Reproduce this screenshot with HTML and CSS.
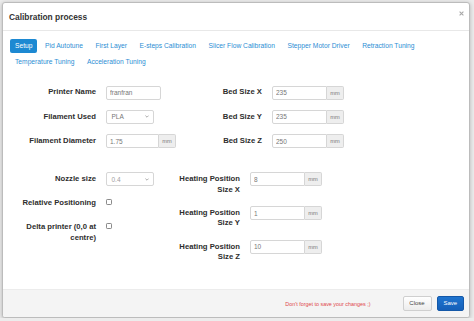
FILE: index.html
```html
<!DOCTYPE html>
<html>
<head>
<meta charset="utf-8">
<link rel="stylesheet" href="styles.css">
</head>
<body>
<div class="modal">
  <div class="modal-header">
    <h4 class="modal-title">Calibration process</h4>
    <span class="close-x"><svg width="5" height="5" viewBox="0 0 5 5"><path d="M0.6 0.6L4.4 4.4M4.4 0.6L0.6 4.4" stroke="#a8a8a8" stroke-width="1.1"/></svg></span>
  </div>
  <div class="modal-body">
    <ul class="nav-pills">
      <li class="active"><a>Setup</a></li>
      <li><a>Pid Autotune</a></li>
      <li><a>First Layer</a></li>
      <li><a>E-steps Calibration</a></li>
      <li><a>Slicer Flow Calibration</a></li>
      <li><a>Stepper Motor Driver</a></li>
      <li><a>Retraction Tuning</a></li>
      <li><a>Temperature Tuning</a></li>
      <li><a>Acceleration Tuning</a></li>
    </ul>

    <div class="grid-top">
      <label class="lbl">Printer Name</label>
      <div><input class="inp w-name" value="franfran"></div>
      <label class="lbl">Bed Size X</label>
      <div class="group"><input class="inp grp" value="235"><span class="addon">mm</span></div>

      <label class="lbl">Filament Used</label>
      <div><div class="select"><span>PLA</span><svg width="4" height="3" viewBox="0 0 4 3"><path d="M0.4 0.6L2 2.2L3.6 0.6" fill="none" stroke="#888" stroke-width="0.7"/></svg></div></div>
      <label class="lbl">Bed Size Y</label>
      <div class="group"><input class="inp grp" value="235"><span class="addon">mm</span></div>

      <label class="lbl">Filament Diameter</label>
      <div class="group"><input class="inp grp w-diam" value="1.75"><span class="addon">mm</span></div>
      <label class="lbl">Bed Size Z</label>
      <div class="group"><input class="inp grp" value="250"><span class="addon">mm</span></div>
    </div>

    <div class="bottom">
      <div class="col-left">
        <div class="row">
          <label class="lbl lbl-left">Nozzle size</label>
          <div class="select muted"><span>0.4</span><svg width="4" height="3" viewBox="0 0 4 3"><path d="M0.4 0.6L2 2.2L3.6 0.6" fill="none" stroke="#888" stroke-width="0.7"/></svg></div>
        </div>
        <div class="row">
          <label class="lbl lbl-left">Relative Positioning</label>
          <span class="check"></span>
        </div>
        <div class="row">
          <label class="lbl lbl-left">Delta printer (0,0 at centre)</label>
          <span class="check"></span>
        </div>
      </div>
      <div class="col-right">
        <div class="row">
          <label class="lbl lbl-right">Heating Position Size X</label>
          <div class="group"><input class="inp grp" value="8"><span class="addon">mm</span></div>
        </div>
        <div class="row">
          <label class="lbl lbl-right">Heating Position Size Y</label>
          <div class="group"><input class="inp grp" value="1"><span class="addon">mm</span></div>
        </div>
        <div class="row">
          <label class="lbl lbl-right">Heating Position Size Z</label>
          <div class="group"><input class="inp grp" value="10"><span class="addon">mm</span></div>
        </div>
      </div>
    </div>
  </div>
  <div class="modal-footer">
    <span class="reminder">Don't forget to save your changes ;)</span>
    <button class="btn btn-default">Close</button>
    <button class="btn btn-primary">Save</button>
  </div>
</div>
</body>
</html>
```

FILE: styles.css
```css
* {
  box-sizing: border-box;
  margin: 0;
  padding: 0;
}

body {
  background: #ececec;
  font-family: "Liberation Sans", Arial, sans-serif;
  color: #333;
  padding: 2px 4px 0 2px;
}

.modal {
  height: 316px;
  background: #fff;
  border: 1px solid #bcbcbc;
  border-radius: 3px;
  box-shadow: 0 1px 4px rgba(0, 0, 0, 0.25);
  display: flex;
  flex-direction: column;
  overflow: hidden;
}

.modal-header {
  height: 28px;
  flex: none;
  border-bottom: 1px solid #e8e8e8;
  display: flex;
  align-items: center;
  justify-content: space-between;
  padding: 0 5px 0 6px;
}

.modal-title {
  font-size: 8.4px;
  font-weight: bold;
  color: #333;
  line-height: 10px;
}

.close-x {
  align-self: flex-start;
  margin-top: 7.5px;
  display: flex;
}

.modal-body {
  flex: 1;
  padding: 8px 7px 0 7px;
}

.nav-pills {
  list-style: none;
  display: flex;
  flex-wrap: wrap;
  row-gap: 2px;
  column-gap: 2.5px;
}

.nav-pills a {
  display: block;
  padding: 3px 5px;
  font-size: 6.7px;
  line-height: 8px;
  color: #2c8ed4;
  border-radius: 2px;
}

.nav-pills .active a {
  background: #1d89d2;
  color: #fff;
}

.lbl {
  font-weight: bold;
  font-size: 7.7px;
  line-height: 10.5px;
  text-align: right;
  color: #2e2e2e;
}

.grid-top {
  margin-top: 16.7px;
  display: grid;
  grid-template-columns: 86px 85px 61px auto;
  column-gap: 10px;
  row-gap: 10.3px;
  align-items: center;
}

.inp {
  display: block;
  height: 14px;
  width: 55px;
  border: 1px solid #d6d6d6;
  border-radius: 2px;
  font-family: "Liberation Sans", Arial, sans-serif;
  font-size: 6.5px;
  color: #777;
  padding: 0 3px;
  background: #fff;
  outline: none;
}

.w-name {
  width: 55px;
}

.group {
  display: flex;
}

.inp.grp {
  width: 55px;
  border-radius: 2px 0 0 2px;
}

.inp.w-diam {
  width: 53px;
}

.addon {
  width: 17px;
  height: 14px;
  background: #eeeeee;
  border: 1px solid #d6d6d6;
  border-left: 0;
  border-radius: 0 2px 2px 0;
  font-size: 5.7px;
  color: #777;
  display: flex;
  align-items: center;
  justify-content: center;
}

.select {
  width: 48px;
  height: 14px;
  border: 1px solid #d6d6d6;
  border-radius: 2px;
  background: #fff;
  display: flex;
  align-items: center;
  justify-content: space-between;
  padding: 0 4.5px 0 4.5px;
  font-size: 6.5px;
  color: #777;
}

.select.muted {
  color: #a0a0a0;
}

.bottom {
  margin-top: 24.2px;
  display: flex;
}

.col-left {
  width: 166px;
  display: flex;
  flex-direction: column;
  row-gap: 10px;
}

.col-right {
  display: flex;
  flex-direction: column;
  row-gap: 11px;
}

.row {
  display: flex;
  align-items: flex-start;
  column-gap: 10px;
  min-height: 14px;
}

.row .lbl {
  padding-top: 1.75px;
}

.lbl-left {
  width: 86px;
  flex: none;
}

.lbl-right {
  width: 64px;
  flex: none;
}

.check {
  width: 6px;
  height: 6px;
  margin-top: 3px;
  border: 1px solid #8a8a8a;
  border-radius: 1.2px;
  background: #fff;
}

.modal-footer {
  height: 28px;
  flex: none;
  background: #f4f4f4;
  border-top: 1px solid #ececec;
  display: flex;
  align-items: center;
  justify-content: flex-end;
  padding-right: 5px;
}

.reminder {
  font-size: 5.4px;
  color: #e0474b;
  margin-right: 32px;
}

.btn {
  height: 14.4px;
  font-family: "Liberation Sans", Arial, sans-serif;
  font-size: 6px;
  border-radius: 2px;
  display: flex;
  align-items: center;
  justify-content: center;
}

.btn-default {
  width: 29px;
  background: linear-gradient(#ffffff, #ececec);
  border: 1px solid #cfcfcf;
  color: #444;
  margin-right: 5px;
}

.btn-primary {
  width: 27.5px;
  background: linear-gradient(#1f74cf, #155fb8);
  border: 1px solid #1458a8;
  color: #fff;
}
```
